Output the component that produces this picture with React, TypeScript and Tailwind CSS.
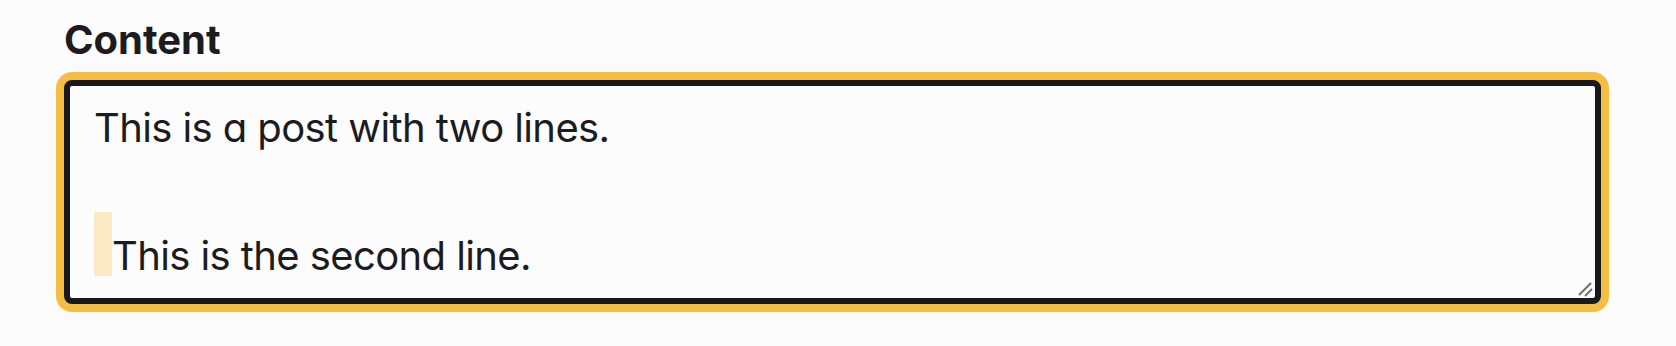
import { useState } from 'react'

const TEXTO_INICIAL = 'This is a post with two lines.\n\n\tThis is the second line.'

export default function App() {
  const [conteudo, setConteudo] = useState(TEXTO_INICIAL)

  return (
    <div className="min-h-screen bg-[#fbfbfb] pl-16 pt-4 font-['Inter','Liberation_Sans',sans-serif] [font-feature-settings:'cv11'] text-[#1c1c1e]">
      <label htmlFor="conteudo" className="block text-[40px] font-bold leading-[48px]">
        Content
      </label>
      <div className="relative mt-4 w-[1537px]">
        <textarea
          id="conteudo"
          value={conteudo}
          onChange={(e) => setConteudo(e.target.value)}
          spellCheck={false}
          className="block h-[224px] w-full resize-none rounded-[8px] border-[6px] border-[#18191b] bg-[#fcfcfc] px-6 py-[10px] text-[40px] leading-[64px] tracking-[-0.6px] text-[#1c1c1e] shadow-[0_0_0_8px_#f5bd41] outline-none [tab-size:18px]"
        />
        {/* destaque da selecao no inicio da segunda linha */}
        <span className="pointer-events-none absolute left-[30px] top-[132px] h-16 w-[18px] bg-[#fce9c6]" />
        {/* alca de redimensionar */}
        <svg
          className="pointer-events-none absolute left-[1514px] top-[201px]"
          width="16"
          height="16"
          viewBox="0 0 16 16"
          fill="none"
          stroke="#6e6e6e"
          strokeWidth="2"
        >
          <path d="M1 14 L13 2" />
          <path d="M7 15 L14 8" />
        </svg>
      </div>
    </div>
  )
}
